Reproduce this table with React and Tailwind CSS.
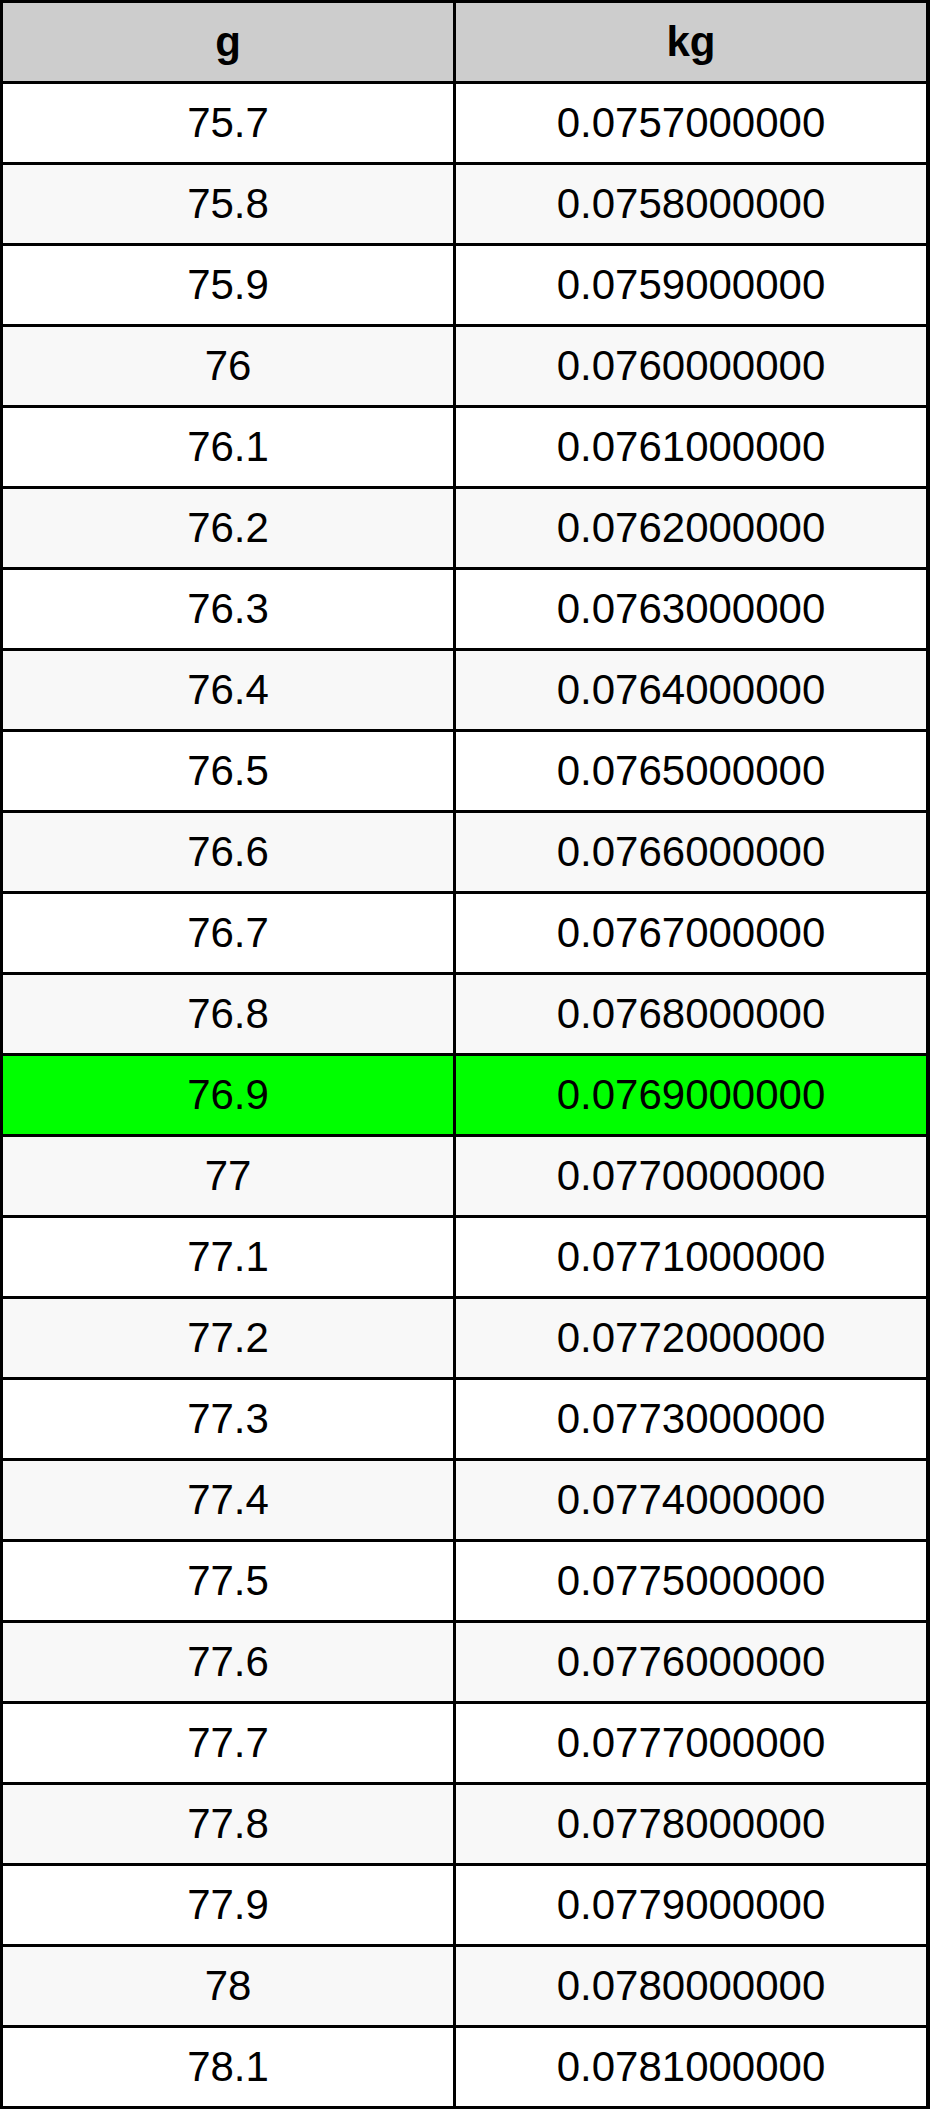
const rows = [];
for (let i = 757; i <= 781; i++) {
  const g = i / 10;
  rows.push({ g: String(g), kg: (g / 1000).toFixed(10) });
}

const App = () => {
  return (
    <div className="w-[930px] bg-white" style={{ fontFamily: '"Liberation Sans", Arial, sans-serif' }}>
      <div className="border-t-[3px] border-l-[3px] border-r-[4px] border-black text-black text-[42px]">
        <div className="flex bg-[#cdcdcd] border-b-[3px] border-black font-bold">
          <div className="w-[450px] h-[78px] pb-[2px] flex items-center justify-center">g</div>
          <div className="w-[3px] bg-black"></div>
          <div className="flex-1 h-[78px] pb-[2px] flex items-center justify-center">kg</div>
        </div>
        {rows.map((row, idx) => (
          <div
            key={row.g}
            className={`flex border-b-[3px] border-black ${
              row.g === "76.9" ? "bg-[#00ff00]" : idx % 2 === 1 ? "bg-[#f8f8f8]" : "bg-white"
            }`}
          >
            <div className="w-[450px] h-[78px] pb-[2px] flex items-center justify-center">{row.g}</div>
            <div className="w-[3px] bg-black"></div>
            <div className="flex-1 h-[78px] pb-[2px] flex items-center justify-center">{row.kg}</div>
          </div>
        ))}
      </div>
    </div>
  );
};

export default App;
